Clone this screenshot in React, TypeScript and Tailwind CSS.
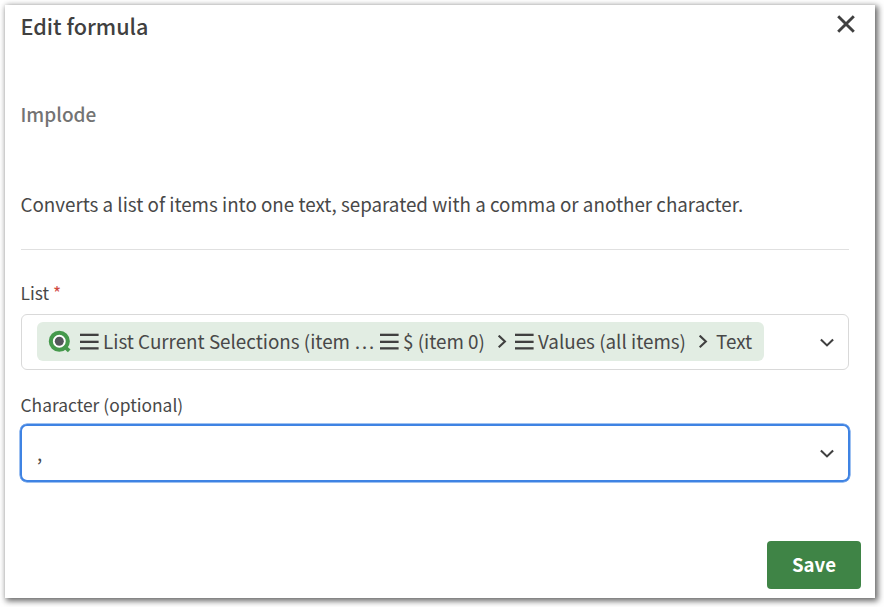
import React from "react";

const MenuLines = () => (
  <svg className="h-[18px] w-[19px] shrink-0" viewBox="0 0 19 18" fill="#404040">
    <rect x="0" y="0.7" width="18.6" height="2.3" />
    <rect x="0" y="7.7" width="18.6" height="2.3" />
    <rect x="0" y="14.2" width="18.6" height="2.3" />
  </svg>
);

const ChevronRight = ({ className }: { className: string }) => (
  <svg className={"h-[14px] w-[9px] shrink-0 " + className} viewBox="0 0 9 14" fill="none" stroke="#404040" strokeWidth="2.1">
    <path d="M0.7 0.6 L6.9 6.4 L0.7 12.2" />
  </svg>
);

const ChevronDown = () => (
  <svg className="h-[9px] w-[14px] shrink-0" viewBox="0 0 14 9" fill="none" stroke="#404040" strokeWidth="2.1">
    <path d="M0.9 1.4 L7 7.4 L13.1 1.4" />
  </svg>
);

const QlikLogo = () => (
  <svg className="h-[24px] w-[24px] shrink-0" viewBox="0 0 24 24" fill="none">
    <path d="M16.8 16.8 L21.2 20.9" stroke="#45994c" strokeWidth="3.8" />
    <circle cx="11.3" cy="11.2" r="8.5" fill="#fff" stroke="#45994c" strokeWidth="4.1" />
    <circle cx="11.3" cy="11.2" r="4.5" fill="#54565b" />
  </svg>
);

export default function App() {
  return (
    <div className="h-[607px] w-[884px] overflow-hidden bg-white pt-[5px] pl-[5px] font-['Noto_Sans_CJK_SC',sans-serif] text-[#484848]">
      <div className="flex h-[593px] w-[870px] flex-col bg-white pl-4 shadow-[2px_2px_6px_1px_rgba(0,0,0,0.6)]">
        <header className="flex h-[40px] items-start justify-between pr-[20px]">
          <h1 className="-ml-[0.5px] pt-[5px] text-[21.6px] leading-[32px] font-medium text-[#404040]">Edit formula</h1>
          <svg className="mt-[10px] h-[18px] w-[18px]" viewBox="0 0 18 18" fill="none" stroke="#404040" strokeWidth="2.9">
            <path d="M1.2 1.2 L16.8 16.8 M16.8 1.2 L1.2 16.8" />
          </svg>
        </header>
        <h2 className="mt-[54px] -ml-[0.5px] text-[19px] leading-[30px] font-medium text-[#737373]">Implode</h2>
        <div className="mt-[59px] w-[828px] border-b border-[#e0e0e0] pb-[29px]">
          <p className="-ml-[0.5px] text-[18.79px] leading-[32px] whitespace-nowrap">Converts a list of items into one text, separated with a comma or another character.</p>
        </div>
        <label className="mt-[30px] -ml-[0.5px] text-[17.4px] leading-[26px]">
          List <span className="text-[#d04a3f]">*</span>
        </label>
        <div className="mt-[8px] flex h-[56px] w-[828px] items-center justify-between rounded-[6px] border border-[#d9d9d9] pr-[14px] pl-[15px]">
          <div className="mb-px flex h-[39px] w-[727px] items-center rounded-[6px] bg-[#e2ede3] pl-[11px] text-[18.82px] leading-[30px] whitespace-nowrap">
            <QlikLogo />
            <span className="ml-[8px] flex w-[300px] items-center gap-[4px]"><MenuLines /><span className="pb-[2px]">List Current Selections (item …</span></span>
            <span className="flex w-[118px] items-center gap-[4px]"><MenuLines /><span className="pb-[2px]">$ (item 0)</span></span>
            <ChevronRight className="mr-[8px]" />
            <span className="flex w-[184px] items-center gap-[4px]"><MenuLines /><span className="pb-[2px]">Values (all items)</span></span>
            <ChevronRight className="mr-[8px]" />
            <span className="pb-[2px]">Text</span>
          </div>
          <ChevronDown />
        </div>
        <label className="mt-[22px] -ml-[0.5px] text-[17.4px] leading-[26px]">Character (optional)</label>
        <div className="mt-[6px] -ml-px flex h-[58px] w-[830px] items-center justify-between rounded-[7px] border-2 border-[#3f83e3] pr-[14px] pl-[15px] shadow-[0_0_0_0.5px_#3f83e3]">
          <span className="text-[18.8px] leading-[30px]">,</span>
          <ChevronDown />
        </div>
        <div className="mt-[59px] flex justify-end pr-[14px]">
          <button className="h-[48px] w-[94px] rounded-[4px] bg-[#3f8446] pb-[2px] text-[18.6px] leading-[30px] font-bold text-white">Save</button>
        </div>
      </div>
    </div>
  );
}
